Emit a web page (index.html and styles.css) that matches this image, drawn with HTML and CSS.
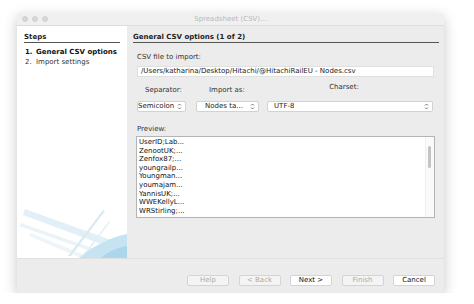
FILE: index.html
```html
<!DOCTYPE html>
<html lang="en">
<head>
    <meta charset="UTF-8">
    <title>Spreadsheet (CSV)...</title>
    <link rel="stylesheet" href="styles.css">
</head>
<body>
    <div class="window">
        <div class="titlebar">
            <div class="lights"><span></span><span></span><span></span></div>
            <div class="title">Spreadsheet (CSV)...</div>
        </div>
        <div class="main">
            <div class="steps">
                <div class="steps-head">Steps</div>
                <ol class="step-list">
                    <li class="current"><span class="num">1.</span>General CSV options</li>
                    <li><span class="num">2.</span>Import settings</li>
                </ol>
                <svg class="swoosh" width="110" height="52" viewBox="0 0 110 52">
                    <path d="M8 3 L94 34 L92 41 L6 9 Z" fill="#e3eff6"/>
                    <path d="M4 17 L84 45 L82 48 L2 20 Z" fill="#eaf3f8"/>
                    <path d="M14 27 L70 50 L64 52 L12 30 Z" fill="#edf5f9"/>
                    <path d="M86 4 L88 5 L54 50 L51 50 Z" fill="#d9eaf3"/>
                    <path d="M92 15 L93 16 L66 52 L64 52 Z" fill="#e2eff6"/>
                    <path d="M62 52 C74 42 90 32 110 28 L110 52 Z" fill="#c6e3f1"/>
                    <path d="M84 52 C90 46 100 42 110 40 L110 52 Z" fill="#acd6eb"/>
                </svg>
            </div>
            <div class="content">
                <div class="content-head">General CSV options (1 of 2)</div>
                <div class="form">
                    <div class="label">CSV file to import:</div>
                    <div class="field">/Users/katharina/Desktop/Hitachi/@HitachiRailEU - Nodes.csv</div>
                    <div class="options">
                        <div class="opt opt-sep">
                            <div class="opt-label">Separator:</div>
                            <div class="select"><span class="val">Semicolon</span><svg class="arrows" width="5" height="7" viewBox="0 0 5 7"><path d="M1 2.5 L2.5 1 L4 2.5 M1 4.5 L2.5 6 L4 4.5" fill="none" stroke="#555" stroke-width="0.8"/></svg></div>
                        </div>
                        <div class="opt opt-imp">
                            <div class="opt-label">Import as:</div>
                            <div class="select"><span class="val">Nodes ta...</span><svg class="arrows" width="5" height="7" viewBox="0 0 5 7"><path d="M1 2.5 L2.5 1 L4 2.5 M1 4.5 L2.5 6 L4 4.5" fill="none" stroke="#555" stroke-width="0.8"/></svg></div>
                        </div>
                        <div class="opt opt-charset">
                            <div class="opt-label">Charset:</div>
                            <div class="select"><span class="val">UTF-8</span><svg class="arrows" width="5" height="7" viewBox="0 0 5 7"><path d="M1 2.5 L2.5 1 L4 2.5 M1 4.5 L2.5 6 L4 4.5" fill="none" stroke="#555" stroke-width="0.8"/></svg></div>
                        </div>
                    </div>
                    <div class="label preview-label">Preview:</div>
                    <div class="preview">
                        <div class="rows">
                            <div>UserID;Lab...</div>
                            <div>ZenootUK;...</div>
                            <div>Zenfox87;...</div>
                            <div>youngrailp...</div>
                            <div>Youngman...</div>
                            <div>youmajam...</div>
                            <div>YannisUK;...</div>
                            <div>WWEKellyL...</div>
                            <div>WRStirling;...</div>
                        </div>
                        <div class="scroll"><div class="thumb"></div></div>
                    </div>
                </div>
            </div>
        </div>
        <div class="footer">
            <button class="btn disabled">Help</button>
            <button class="btn disabled">&lt; Back</button>
            <button class="btn">Next &gt;</button>
            <button class="btn disabled">Finish</button>
            <button class="btn">Cancel</button>
        </div>
    </div>
</body>
</html>
```

FILE: styles.css
```css
body {
    margin: 0;
    background: #ffffff;
    font-family: 'DejaVu Sans', sans-serif;
    font-size: 7px;
    color: #222;
}

.window {
    margin: 13px 0 0 17px;
    width: 427px;
    height: 280px;
    background: #ececec;
    border-radius: 4px;
    box-shadow: 0 4px 14px rgba(0, 0, 0, 0.22);
    display: flex;
    flex-direction: column;
    overflow: hidden;
}

.titlebar {
    height: 12px;
    display: flex;
    align-items: center;
    position: relative;
    background: #f0f0f0;
    border-bottom: 1px solid #dcdcdc;
}

.lights {
    display: flex;
    gap: 4px;
    padding-left: 5px;
}

.lights span {
    width: 6px;
    height: 6px;
    border-radius: 50%;
    background: #d8d8d8;
    border: 1px solid #cfcfcf;
    box-sizing: border-box;
}

.title {
    position: absolute;
    left: 0;
    right: 0;
    text-align: center;
    color: #b8b8b8;
    font-size: 7px;
}

.main {
    display: flex;
    height: 232px;
}

.steps {
    width: 110px;
    background: #ffffff;
    position: relative;
    box-sizing: border-box;
    padding: 7px 7px 0 7px;
}

.steps-head,
.content-head {
    font-weight: bold;
    font-size: 7px;
    line-height: 8px;
    padding-bottom: 1px;
    border-bottom: 1px solid #555;
}

.step-list {
    list-style: none;
    margin: 5px 0 0;
    padding: 0;
    line-height: 9.5px;
}

.step-list li {
    display: flex;
    color: #333;
}

.step-list li.current {
    font-weight: bold;
    color: #111;
}

.num {
    width: 11px;
    padding-left: 1px;
    font-weight: normal;
}

.current .num {
    font-weight: bold;
}

.swoosh {
    position: absolute;
    left: 0;
    bottom: 0;
}

.content {
    flex: 1;
    padding: 7px 5px 0 6px;
}

.form {
    padding: 10px 4px 0 4px;
}

.label {
    color: #333;
    height: 9px;
    line-height: 9px;
}

.field {
    margin-top: 4px;
    height: 9px;
    line-height: 9px;
    background: #fff;
    border: 1px solid #e0e0e0;
    padding-left: 3px;
    width: 292px;
}

.options {
    display: flex;
    margin-top: 8px;
    gap: 10px;
}

.opt-label {
    color: #333;
    height: 16px;
    line-height: 10px;
    text-align: center;
}

.select {
    height: 11px;
    line-height: 11px;
    background: #fff;
    border: 1px solid #d2d2d2;
    border-radius: 2px;
    padding-left: 3px;
    display: flex;
    justify-content: space-between;
    align-items: center;
    box-sizing: border-box;
}

.val {
    overflow: hidden;
    white-space: nowrap;
}

.arrows {
    flex: none;
    margin: 0 3px 0 2px;
}

.opt-sep .select {
    width: 49px;
    padding-left: 0;
}

.opt-sep .val {
    direction: rtl;
}

.opt-sep .opt-label {
    padding-left: 8px;
    text-align: left;
}

.opt-imp .select {
    width: 63px;
    padding-left: 8px;
}

.opt-imp .opt-label {
    text-align: left;
    padding-left: 13px;
}

.opt-charset {
    flex: 1;
    margin-left: -2px;
}

.opt-charset .select {
    width: 166px;
    padding-left: 6px;
}

.opt-charset .opt-label {
    margin-top: -3px;
    height: 19px;
    padding-right: 14px;
}

.preview-label {
    margin-top: 13px;
}

.preview {
    margin-top: 2px;
    margin-left: -1px;
    width: 297px;
    height: 80px;
    background: #fff;
    border: 1px solid #b4b4b4;
    display: flex;
}

.rows {
    flex: 1;
    padding: 1px 0 0 2px;
    font-size: 7px;
    line-height: 8.6px;
    color: #111;
}

.scroll {
    width: 8px;
    border-left: 1px solid #f0f0f0;
    background: #fafafa;
    padding-top: 9px;
}

.thumb {
    width: 3px;
    height: 22px;
    margin-left: 2px;
    background: #c4c4c4;
    border-radius: 2px;
}

.footer {
    flex: 1;
    border-top: 1px solid #e0e0e0;
    display: flex;
    justify-content: flex-end;
    align-items: center;
    gap: 9.5px;
    padding: 8px 9px 0 0;
}

.btn {
    width: 42px;
    height: 11px;
    padding: 0;
    font-family: 'DejaVu Sans', sans-serif;
    font-size: 7px;
    line-height: 9px;
    background: #fff;
    border: 1px solid #d4d4d4;
    border-radius: 2px;
    color: #111;
}

.btn.disabled {
    background: #f4f4f4;
    color: #aaa;
}
```
